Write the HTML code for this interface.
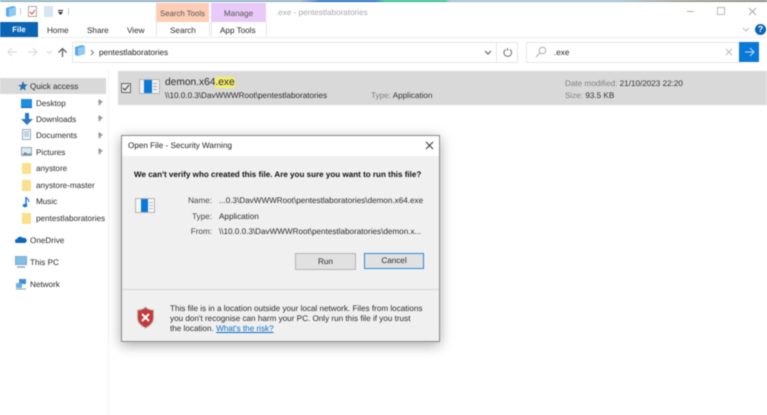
<!DOCTYPE html>
<html><head><meta charset="utf-8">
<style>
html,body{margin:0;padding:0;background:#fff}
#r{position:relative;width:767px;height:415px;overflow:hidden;background:#fff;font-family:"Liberation Sans",sans-serif;font-size:8.15px;color:#2a2a2a;filter:blur(.4px);text-rendering:geometricPrecision}
#r div,#r svg{position:absolute}
.t{white-space:nowrap;line-height:11px}
.g{color:#808080}
</style></head><body>
<div id="r">
<!-- top strip -->
<div style="left:0;top:0;width:767px;height:2px;background:linear-gradient(90deg,#8fb3c4 0,#8fb3c4 300px,#1f6fc0 320px,#1f6fc0 375px,#2fc08c 385px,#2fc08c 445px,#9cc0cf 450px,#9cc0cf 620px,#a09c94 680px,#8a8a84 767px)"></div>
<!-- title bar icons -->
<svg style="left:5px;top:6px" width="12" height="11"><path d="M1 2l7-2 3 1v8l-7 2-3-1z" fill="#5aa9e6"/><path d="M4 3l7-2v8l-7 2z" fill="#8fcaf2"/></svg>
<div style="left:20px;top:8px;width:1px;height:7px;background:#ccc"></div>
<svg style="left:28px;top:6px" width="10" height="12"><rect x=".5" y=".5" width="8" height="10" fill="#fff" stroke="#aaa"/><path d="M2 6l2 2 3-4" stroke="#d0402c" fill="none"/></svg>
<div style="left:44px;top:6px;width:9px;height:11px;background:#d6e4f2"></div>
<div style="left:58px;top:10px;width:5px;height:1px;background:#222"></div>
<svg style="left:58px;top:12px" width="6" height="4"><path d="M0 0h5l-2.500 3z" fill="#222"/></svg>
<div style="left:68px;top:8px;width:1px;height:7px;background:#ccc"></div>
<!-- context tabs -->
<div style="left:156px;top:3px;width:53px;height:19px;background:#fdcdb5"></div>
<div class="t" style="left:156px;top:7.500px;width:53px;text-align:center;color:#555;font-size:7.800px">Search Tools</div>
<div style="left:211px;top:3px;width:55px;height:19px;background:#e9c9f7"></div>
<div class="t" style="left:211px;top:7.500px;width:55px;text-align:center;color:#555">Manage</div>
<div class="t" style="left:276px;top:6.500px;color:#a8a8a8">.exe - pentestlaboratories</div>
<div style="left:156px;top:22px;width:1px;height:14px;background:#e6e6e6"></div>
<div style="left:209px;top:22px;width:1px;height:14px;background:#e6e6e6"></div>
<div style="left:211px;top:22px;width:1px;height:14px;background:#e6e6e6"></div>
<div style="left:266px;top:22px;width:1px;height:14px;background:#e6e6e6"></div>
<!-- window buttons -->
<div style="left:687px;top:11px;width:7px;height:1px;background:#aaa"></div>
<div style="left:717px;top:7px;width:6px;height:6px;border:1px solid #bbb"></div>
<svg style="left:748px;top:7px" width="9" height="9"><path d="M1 1l7 7M8 1l-7 7" stroke="#aaa" fill="none"/></svg>
<!-- ribbon -->
<div style="left:0;top:22px;width:38px;height:15px;background:#0a64b4"></div>
<div class="t" style="left:0;top:24px;width:38px;text-align:center;color:#fff;font-weight:bold;font-size:7.800px">File</div>
<div class="t" style="left:47px;top:25px">Home</div>
<div class="t" style="left:87px;top:25px">Share</div>
<div class="t" style="left:127px;top:25px">View</div>
<div class="t" style="left:170px;top:25px">Search</div>
<div class="t" style="left:220px;top:25px">App Tools</div>
<div style="left:0;top:37px;width:767px;height:1px;background:#ececec"></div>
<svg style="left:742px;top:27px" width="8" height="5"><path d="M1 1l3 3 3-3" stroke="#bbb" fill="none"/></svg>
<div class="t" style="left:755px;top:24px;width:11px;height:11px;border-radius:50%;background:#0a64b4;color:#fff;font-weight:bold;text-align:center;font-size:9px">?</div>
<!-- nav -->
<svg style="left:7px;top:47px" width="11" height="10"><path d="M10 5H1M5 1L1 5l4 4" stroke="#d8d8d8" fill="none"/></svg>
<svg style="left:27px;top:47px" width="11" height="10"><path d="M1 5h9M6 1l4 4-4 4" stroke="#d8d8d8" fill="none"/></svg>
<svg style="left:46px;top:50px" width="7" height="5"><path d="M1 1l2.500 2.500L6 1" stroke="#d8d8d8" fill="none"/></svg>
<svg style="left:57px;top:47px" width="11" height="11"><path d="M5.500 10V1.500M1.500 5.500l4-4 4 4" stroke="#666" stroke-width="1.300" fill="none"/></svg>
<!-- address -->
<div style="left:72px;top:42px;width:444px;height:19px;border:1px solid #e6e6e6"></div>
<svg style="left:74px;top:45px" width="12" height="12"><path d="M1 2l7-2 3 1v8l-7 2-3-1z" fill="#5aa9e6"/><path d="M4 3l7-2v8l-7 2z" fill="#8fcaf2"/></svg>
<svg style="left:90px;top:49px" width="5" height="7"><path d="M1 1l2.500 2.500L1 6" stroke="#777" fill="none"/></svg>
<div class="t" style="left:99px;top:47px;color:#222">pentestlaboratories</div>
<svg style="left:484px;top:50px" width="8" height="6"><path d="M1 1l3 3 3-3" stroke="#666" stroke-width="1.200" fill="none"/></svg>
<div style="left:496px;top:42px;width:1px;height:20px;background:#e6e6e6"></div>
<svg style="left:502px;top:46px" width="11" height="12"><path d="M3.500 3.500a3.800 3.800 0 1 0 4.500 0M5.500 2v3" stroke="#777" stroke-width="1.100" fill="none"/></svg>
<!-- search -->
<div style="left:526px;top:42px;width:212px;height:19px;border:1px solid #e6e6e6"></div>
<svg style="left:535px;top:46px" width="12" height="12"><circle cx="7.500" cy="4.500" r="3.300" stroke="#aaa" fill="none"/><path d="M5 7l-4 4" stroke="#aaa" fill="none"/></svg>
<div class="t" style="left:554px;top:47px;color:#222">.exe</div>
<svg style="left:725px;top:48px" width="8" height="8"><path d="M1 1l6 6M7 1l-6 6" stroke="#bbb" fill="none"/></svg>
<div style="left:739px;top:42px;width:20px;height:20px;background:#0a78d7"></div>
<svg style="left:744px;top:47px" width="11" height="10"><path d="M1 5h9M6 1l4 4-4 4" stroke="#bfe0f8" fill="none"/></svg>
<!-- sidebar -->
<div style="left:0;top:78px;width:106px;height:16px;background:#d9d9d9"></div>
<div style="left:108px;top:70px;width:1px;height:345px;background:#f3f3f3"></div>
<svg style="left:17px;top:80px" width="11" height="11"><path d="M6 1l1.300 3.300L10.500 4.500 8 7l.7 3.500L6 8.700 3 10.500 3.800 7 1 5h3.500z" fill="#2a6fb8"/></svg>
<div class="t" style="left:30px;top:81px">Quick access</div>
<div style="left:21px;top:99px;width:11px;height:8px;background:#1c8fe3;border-bottom:1px solid #0a5fa8"></div>
<div class="t" style="left:36px;top:98px">Desktop</div>
<svg style="left:21px;top:113px" width="12" height="12"><path d="M4 0h4v6h4l-6 6-6-6h4z" fill="#2a78c8"/></svg>
<div class="t" style="left:36px;top:114px">Downloads</div>
<svg style="left:22px;top:129px" width="10" height="12"><rect x=".5" y=".5" width="8" height="10" fill="#f4f6f8" stroke="#9aacb8"/><path d="M2 3h5M2 5h5M2 7h5" stroke="#8ab0cc"/></svg>
<div class="t" style="left:36px;top:130px">Documents</div>
<svg style="left:21px;top:147px" width="12" height="10"><rect x=".5" y=".5" width="10" height="8" fill="#dce8f0" stroke="#9aacb8"/><path d="M1 8l3-3 3 2 3-1v2z" fill="#6a8a9a"/></svg>
<div class="t" style="left:36px;top:147px">Pictures</div>
<div style="left:22px;top:163px;width:9px;height:11px;background:#fbe08c"></div>
<div class="t" style="left:36px;top:163px">anystore</div>
<div style="left:22px;top:180px;width:9px;height:11px;background:#fbe08c"></div>
<div class="t" style="left:36px;top:180px">anystore-master</div>
<svg style="left:22px;top:196px" width="10" height="12"><path d="M4 1v8" stroke="#1c78d8" stroke-width="1.500"/><ellipse cx="3" cy="9.500" rx="2.400" ry="1.800" fill="#1c78d8"/><path d="M4 1c1 2 3 2 3 5" stroke="#1c78d8" fill="none"/></svg>
<div class="t" style="left:36px;top:196px">Music</div>
<div style="left:22px;top:213px;width:9px;height:11px;background:#fbe08c"></div>
<div class="t" style="left:36px;top:213px">pentestlaboratories</div>
<svg style="left:15px;top:235px" width="12" height="9"><path d="M2 8a2 2 0 0 1 0-4 3.500 3.500 0 0 1 6-1 2.500 2.500 0 0 1 2 5z" fill="#1366b8"/></svg>
<div class="t" style="left:30px;top:235px">OneDrive</div>
<svg style="left:15px;top:256px" width="12" height="12"><rect x=".5" y=".5" width="11" height="8" fill="#7cc0ec" stroke="#8aa8bc"/><path d="M2 11h8" stroke="#8aa8bc" stroke-width="1.500"/></svg>
<div class="t" style="left:30px;top:257px">This PC</div>
<svg style="left:15px;top:278px" width="12" height="12"><rect x="4" y="1" width="7" height="5" fill="#3f8fd4"/><rect x="1" y="5" width="6" height="5" fill="#6ab0e6"/><path d="M1 11h10" stroke="#8aa"/></svg>
<div class="t" style="left:30px;top:279px">Network</div>
<!-- pins -->
<svg style="left:96px;top:98px" width="8" height="9"><path d="M3 1l4 3-2 1-1 3-1-2-2 2 2-3-1-1z" fill="#999"/></svg>
<svg style="left:96px;top:114px" width="8" height="9"><path d="M3 1l4 3-2 1-1 3-1-2-2 2 2-3-1-1z" fill="#999"/></svg>
<svg style="left:96px;top:131px" width="8" height="9"><path d="M3 1l4 3-2 1-1 3-1-2-2 2 2-3-1-1z" fill="#999"/></svg>
<svg style="left:96px;top:147px" width="8" height="9"><path d="M3 1l4 3-2 1-1 3-1-2-2 2 2-3-1-1z" fill="#999"/></svg>
<!-- result row -->
<div style="left:118px;top:71px;width:649px;height:34px;background:#d9d9d9"></div>
<div style="left:121px;top:83px;width:8px;height:8px;border:1px solid #666;background:#e6e6e6"></div>
<svg style="left:122px;top:84px" width="9" height="8"><path d="M1 4l2 2 4-5" stroke="#333" fill="none"/></svg>
<!-- row file icon -->
<div style="left:139px;top:79px;width:19px;height:13px;background:#f2f2f2;border:1px solid #b4b4b4"></div>
<div style="left:144px;top:80px;width:8px;height:13px;background:#0a78d7"></div>
<div style="left:153px;top:83px;width:4px;height:1px;background:#aaa"></div>
<div style="left:153px;top:86px;width:4px;height:1px;background:#aaa"></div>
<div style="left:153px;top:89px;width:4px;height:1px;background:#aaa"></div>
<div class="t" style="left:165px;top:75.500px;font-size:10.200px;line-height:14px">demon.x64<span style="background:#f4ee70">.exe</span></div>
<div class="t" style="left:165px;top:90px">\\10.0.0.3\DavWWWRoot\pentestlaboratories</div>
<div class="t g" style="left:371px;top:90px">Type: <span style="color:#333">Application</span></div>
<div class="t g" style="left:565px;top:78px">Date modified: <span style="color:#333">21/10/2023 22:20</span></div>
<div class="t g" style="left:565px;top:90px">Size: <span style="color:#333">93.5 KB</span></div>
<!-- dialog -->
<div style="left:121px;top:135px;width:319px;height:207px;background:#f0f0f0;border:1px solid #8a8a8a;box-sizing:border-box;box-shadow:0 3px 12px rgba(0,0,0,.35)"></div>
<div style="left:122px;top:136px;width:317px;height:20px;background:#fff"></div>
<div class="t" style="left:128px;top:140px;color:#222">Open File - Security Warning</div>
<svg style="left:425px;top:141px" width="9" height="9"><path d="M1 1l7 7M8 1l-7 7" stroke="#333" fill="none"/></svg>
<div class="t" style="left:134px;top:168.500px;font-weight:bold;color:#111;font-size:8.070px">We can't verify who created this file. Are you sure you want to run this file?</div>
<!-- dialog file icon -->
<div style="left:135px;top:198px;width:18px;height:13px;background:#f6f6f6;border:1px solid #b4b4b4"></div>
<div style="left:141px;top:199px;width:7px;height:13px;background:#0a78d7"></div>
<div style="left:149px;top:202px;width:4px;height:1px;background:#bbb"></div>
<div style="left:149px;top:205px;width:4px;height:1px;background:#bbb"></div>
<div style="left:149px;top:208px;width:4px;height:1px;background:#bbb"></div>
<div class="t" style="left:180px;top:194.500px;width:32px;text-align:right;color:#444">Name:</div>
<div class="t" style="left:219px;top:194.500px">...0.3\DavWWWRoot\pentestlaboratories\demon.x64.exe</div>
<div class="t" style="left:180px;top:210.500px;width:32px;text-align:right;color:#444">Type:</div>
<div class="t" style="left:219px;top:210.500px">Application</div>
<div class="t" style="left:180px;top:226px;width:32px;text-align:right;color:#444">From:</div>
<div class="t" style="left:219px;top:226px">\\10.0.0.3\DavWWWRoot\pentestlaboratories\demon.x...</div>
<div class="t" style="left:295px;top:253px;width:59px;height:15px;line-height:15px;border:1px solid #b4b4b4;background:#e1e1e1;text-align:center">Run</div>
<div class="t" style="left:364px;top:253px;width:58px;height:14px;line-height:14px;border:1.500px solid #2a8ade;background:#e1e1e1;text-align:center">Cancel</div>
<div style="left:122px;top:289px;width:317px;height:1px;background:#d6d6d6"></div>
<svg style="left:136px;top:306px" width="19" height="23"><path d="M9.500 1c2 2 5 3 8 3v8c0 5-4 8-8 10-4-2-8-5-8-10V4c3 0 6-1 8-3z" fill="#c43a3a" stroke="#bbb"/><path d="M6 8l7 7M13 8l-7 7" stroke="#fff" stroke-width="2"/></svg>
<div class="t" style="left:170px;top:303px">This file is in a location outside your local network. Files from locations</div>
<div class="t" style="left:170px;top:313px">you don't recognise can harm your PC. Only run this file if you trust</div>
<div class="t" style="left:170px;top:323px">the location. <span style="color:#0a6cc4;text-decoration:underline">What's the risk?</span></div>
</div>
</body></html>
